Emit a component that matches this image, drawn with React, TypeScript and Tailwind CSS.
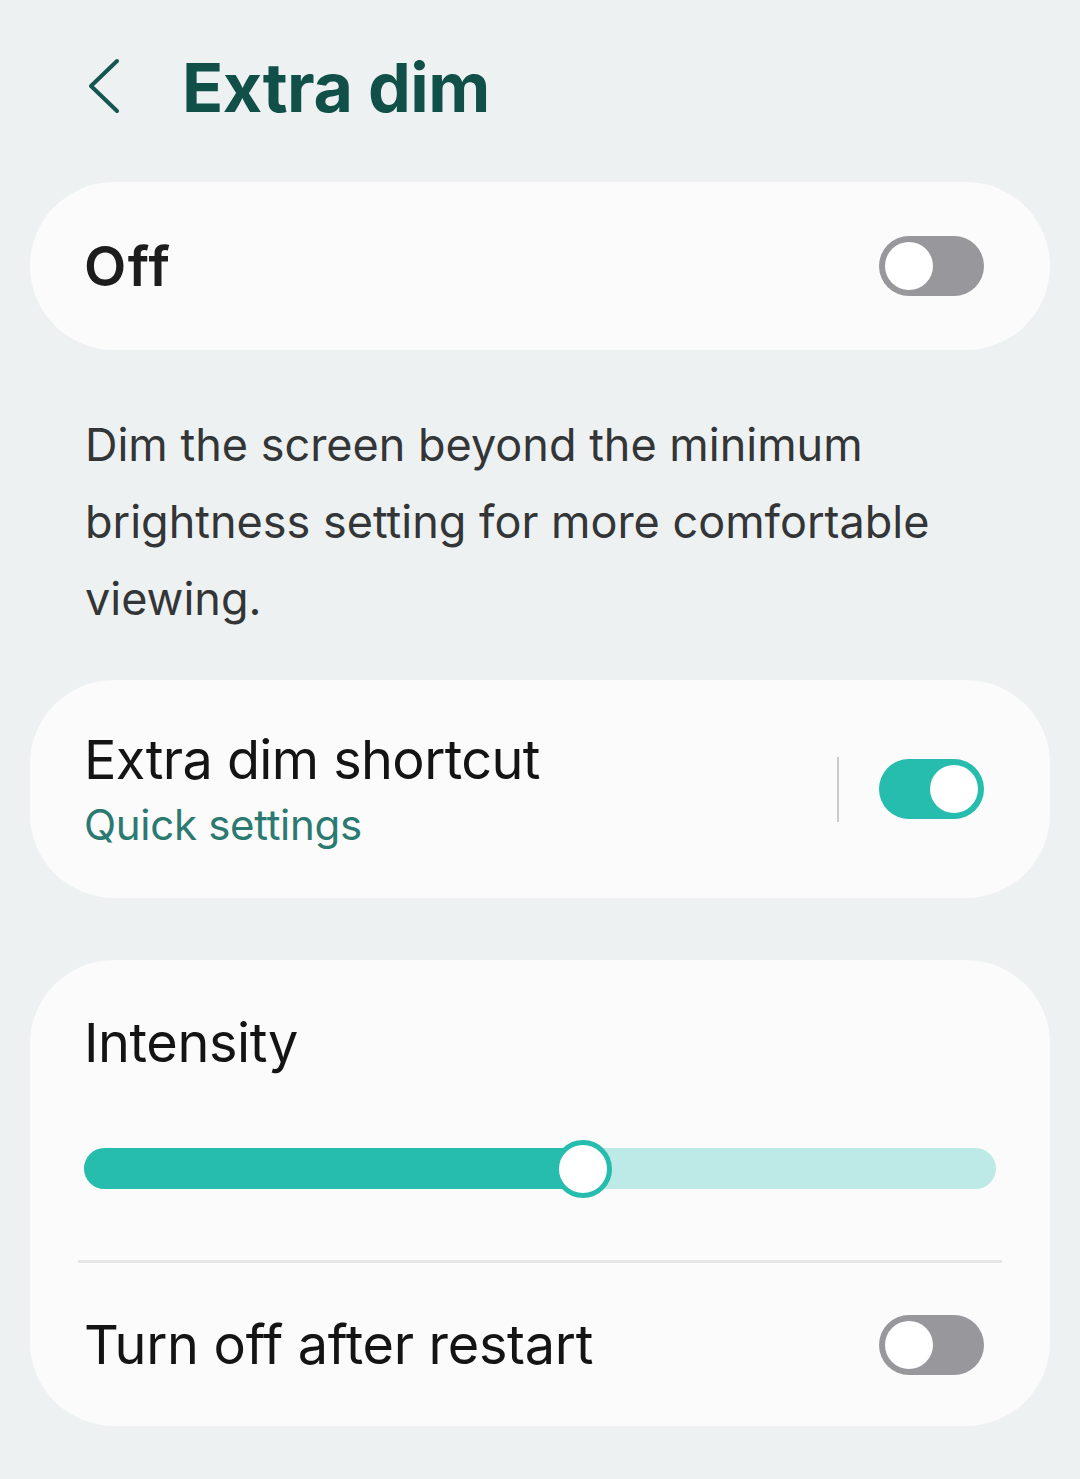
import { useState } from 'react';

const font = { fontFamily: 'Inter, "Noto Sans", sans-serif' };

function Toggle({ on, onClick }: { on: boolean; onClick?: () => void }) {
  return (
    <button
      onClick={onClick}
      className={`relative h-[60px] w-[105px] shrink-0 rounded-full ${on ? 'bg-[#26bcae]' : 'bg-[#98979c]'}`}
    >
      <span
        className={`absolute top-[6px] h-[48px] w-[48px] rounded-full bg-white ${on ? 'right-[6px]' : 'left-[6px]'}`}
      />
    </button>
  );
}

export default function App() {
  const [enabled, setEnabled] = useState(false);
  const [shortcut, setShortcut] = useState(true);
  const [restartOff, setRestartOff] = useState(false);
  const [intensity] = useState(54.7);

  return (
    <div className="min-h-[1479px] w-[1080px] bg-[#edf1f2] px-[30px]" style={font}>
      {/* header */}
      <div className="flex h-[182px] items-start pt-[52px]">
        <button className="ml-[56px] mt-[6px] h-[56px] w-[34px]">
          <svg viewBox="0 0 34 56" className="h-[56px] w-[34px]" fill="none">
            <path d="M31 3 L5 28 L31 53" stroke="#175650" strokeWidth="4" strokeLinecap="round" strokeLinejoin="round" />
          </svg>
        </button>
        <h1 className="ml-[62px] text-[68px] font-bold leading-[70px] tracking-[-0.5px] text-[#114f49]">Extra dim</h1>
      </div>

      {/* master switch */}
      <div className="flex h-[168px] items-center justify-between rounded-[84px] bg-[#fbfbfb] pl-[54px] pr-[66px]">
        <span className="text-[55px] font-semibold tracking-[1.5px] text-[#1d1d1d]">Off</span>
        <Toggle on={enabled} onClick={() => setEnabled(!enabled)} />
      </div>

      {/* description */}
      <p className="h-[330px] pl-[55px] pr-[30px] pt-[56px] text-[45px] leading-[77px] text-[#333536]">
        Dim the screen beyond the minimum brightness setting for more comfortable viewing.
      </p>

      {/* shortcut */}
      <div className="flex h-[218px] items-center rounded-[84px] bg-[#fbfbfb] pl-[54px] pr-[66px]">
        <div className="flex flex-1 flex-col">
          <span className="text-[54px] leading-[68px] tracking-[-0.6px] text-[#141414]">Extra dim shortcut</span>
          <span className="pt-[4px] text-[42px] leading-[54px] tracking-[-0.3px] text-[#2a7a72]">Quick settings</span>
        </div>
        <div className="mr-[40px] h-[65px] w-[2px] bg-[#cbcbcb]" />
        <Toggle on={shortcut} onClick={() => setShortcut(!shortcut)} />
      </div>

      {/* intensity + restart */}
      <div className="mt-[62px] flex h-[466px] flex-col rounded-[84px] bg-[#fbfbfb]">
        <div className="pl-[54px] pt-[48px] text-[54px] leading-[70px] tracking-[-0.4px] text-[#141414]">Intensity</div>
        <div className="relative mx-[54px] mt-[70px] h-[41px] rounded-full bg-[#bdeae6]">
          <div className="h-full rounded-full bg-[#26bcae]" style={{ width: `${intensity}%` }} />
          <div
            className="absolute top-1/2 h-[58px] w-[58px] -translate-x-1/2 -translate-y-1/2 rounded-full border-[5px] border-[#26bcae] bg-white"
            style={{ left: `${intensity}%` }}
          />
        </div>
        <div className="mx-[48px] mt-[71px] h-[3px] bg-[#e6e6e6]" />
        <div className="flex flex-1 items-center justify-between pl-[54px] pr-[66px]">
          <span className="text-[54px] tracking-[-0.3px] text-[#141414]">Turn off after restart</span>
          <Toggle on={restartOff} onClick={() => setRestartOff(!restartOff)} />
        </div>
      </div>
    </div>
  );
}
